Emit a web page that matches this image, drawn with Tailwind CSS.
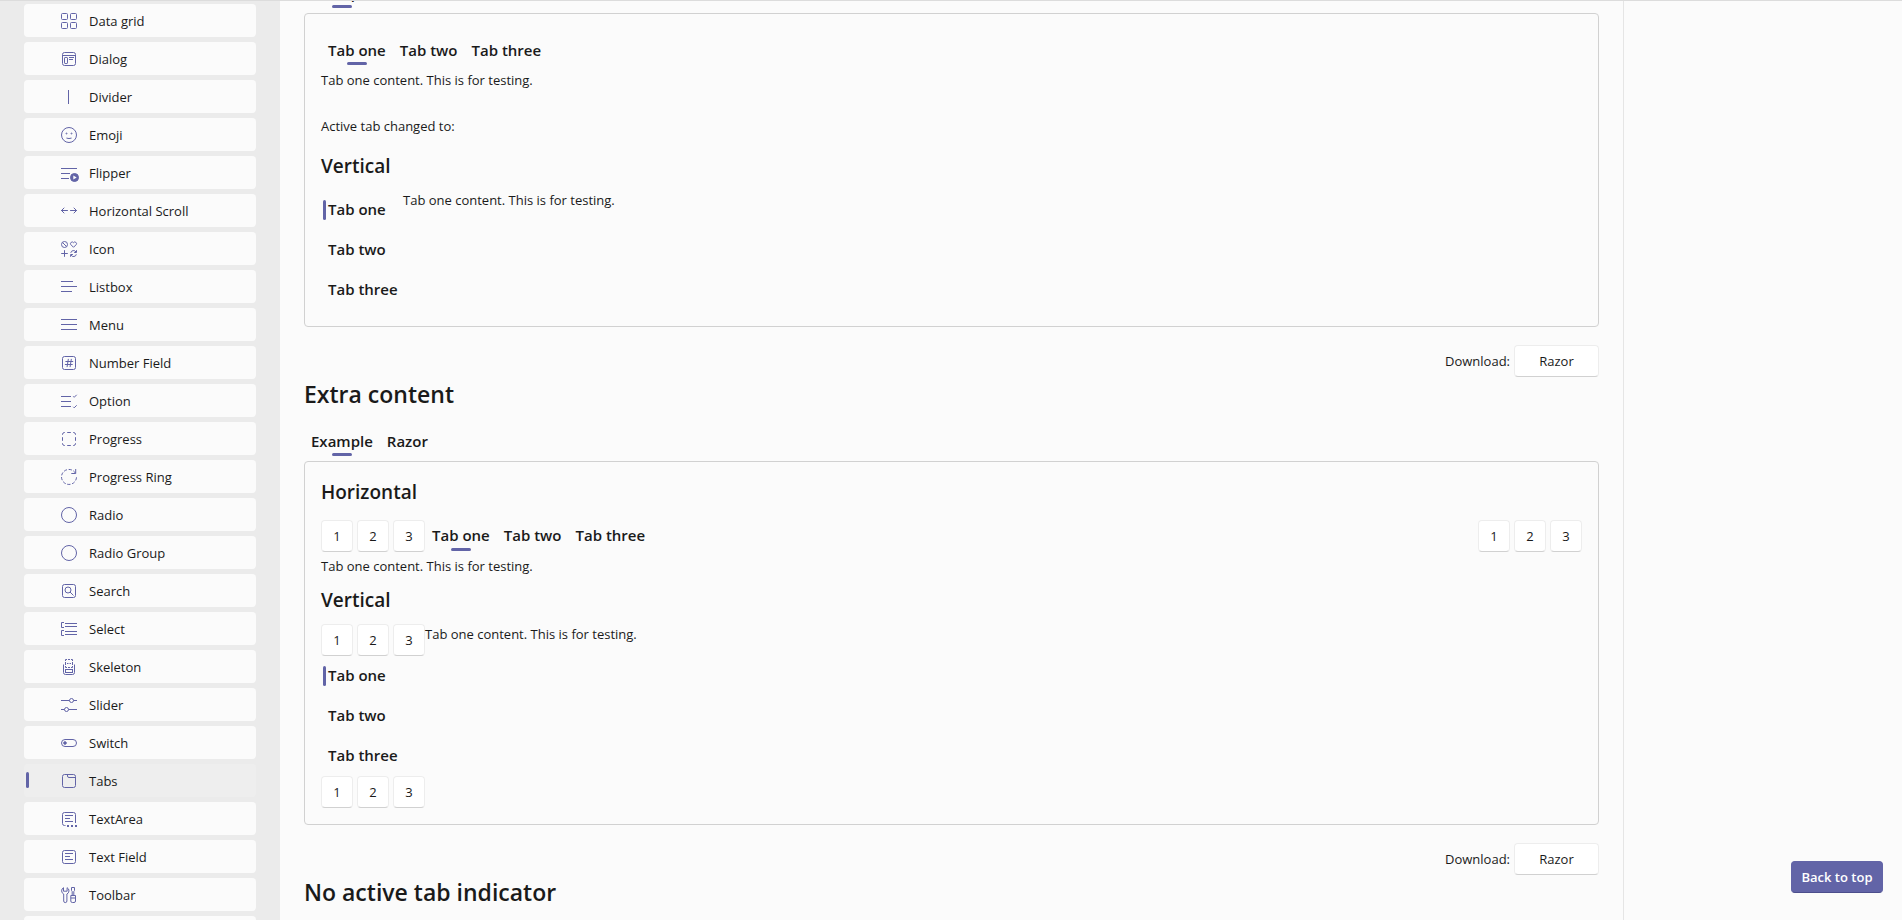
<!DOCTYPE html>
<html lang="en">
<head>
<meta charset="utf-8">
<title>Tabs</title>
<script src="https://cdn.jsdelivr.net/npm/@tailwindcss/browser@4"></script>
</head>
<body class="h-screen overflow-hidden bg-[#fbfbfb] font-['Segoe_UI','Open_Sans',sans-serif] text-[13px] leading-5 text-[#1a1a1a]">
<div class="flex h-full border-t border-[#dcdcdc]">

  <nav aria-label="Components" class="w-[280px] shrink-0 overflow-hidden bg-[#ebebeb] px-6 pt-[3px]">
    <ul class="flex flex-col gap-[5px] [&_a]:flex [&_a]:h-[33px] [&_a]:items-center [&_a]:gap-[10px] [&_a]:rounded [&_a]:bg-[#fbfbfb] [&_a]:pt-px [&_a]:pl-[35px] [&_svg]:size-5 [&_svg]:shrink-0 [&_svg]:overflow-visible [&_svg]:fill-none [&_svg]:stroke-[#6264a7]">
      <li><a href="#"><svg viewBox="0 0 20 20"><rect x="2.5" y="2.5" width="6" height="6" rx="1"/><rect x="11.5" y="2.5" width="6" height="6" rx="1"/><rect x="2.5" y="11.5" width="6" height="6" rx="1"/><rect x="11.5" y="11.5" width="6" height="6" rx="1"/></svg>Data grid</a></li>
      <li><a href="#"><svg viewBox="0 0 20 20"><rect x="3.5" y="3.5" width="13" height="13" rx="2"/><path d="M3.5 6.5h13M10 8.5h5M10 10.5h4"/><rect x="5.5" y="8.5" width="3" height="6" rx=".6"/></svg>Dialog</a></li>
      <li><a href="#"><svg viewBox="0 0 20 20"><path d="M9.5 3v14"/></svg>Divider</a></li>
      <li><a href="#"><svg viewBox="0 0 20 20"><circle cx="10" cy="10" r="7.5"/><path d="M7.8 13.2q2.2.8 4.4 0" stroke-linecap="round"/><circle cx="7.5" cy="8.5" r=".5"/><circle cx="12.5" cy="8.5" r=".5"/></svg>Emoji</a></li>
      <li><a href="#"><svg viewBox="0 0 20 20"><path d="M2 5.5h16M2 10.5h9M2 15.5h8"/><circle cx="15.5" cy="14.5" r="4" class="fill-[#6264a7]"/><path d="M14.3 12.4v4.2l3.4-2.1z" class="fill-[#fbfbfb] stroke-none!"/></svg>Flipper</a></li>
      <li><a href="#"><svg viewBox="0 0 20 20"><path d="M2.5 9.5h6M5 7 2.5 9.5 5 12M11.5 9.5h6M15 7l2.5 2.5L15 12" stroke-linecap="round" stroke-linejoin="round"/></svg>Horizontal Scroll</a></li>
      <li><a href="#"><svg viewBox="0 0 20 20"><circle cx="5.5" cy="5.5" r="3"/><path d="m3.5 3.5 4 4M14.5 8.3l-2.7-2.7a1.6 1.6 0 1 1 2.7-1.9 1.6 1.6 0 1 1 2.7 1.9zM5.5 11.2v6.6M2.2 14.5h6.6M11.8 13.8a2.8 2.8 0 0 1 5.2-.8M17.5 11.2v2.3h-2.3M17.3 15.3a2.8 2.8 0 0 1-5.2.8M11.6 17.8v-2.3h2.3"/></svg>Icon</a></li>
      <li><a href="#"><svg viewBox="0 0 20 20"><path d="M2 4.5h12M2 9.5h16M2 14.5h11"/></svg>Listbox</a></li>
      <li><a href="#"><svg viewBox="0 0 20 20"><path d="M2 4.5h16M2 9.5h16M2 14.5h16"/></svg>Menu</a></li>
      <li><a href="#"><svg viewBox="0 0 20 20"><rect x="3.5" y="3.5" width="13" height="13" rx="2"/><path d="m9.3 6.3-1.2 7.4M12.3 6.3l-1.2 7.4M6.8 8.5h7M6.3 11.5h7" stroke-linecap="round"/></svg>Number Field</a></li>
      <li><a href="#"><svg viewBox="0 0 20 20"><path d="M2 5.5h10M2 10.5h10M2 15.5h10M14.2 5.3l1 1 2.5-2.5M14.2 15.8l1 1 2.5-2.5"/></svg>Option</a></li>
      <li><a href="#"><svg viewBox="0 0 20 20"><path d="M3.5 6V5.5a2 2 0 0 1 2-2H6M14 3.5h.5a2 2 0 0 1 2 2V6M16.5 14v.5a2 2 0 0 1-2 2H14M6 16.5h-.5a2 2 0 0 1-2-2V14M8.2 3.5h3.6M8.2 16.5h3.6M3.5 8.2v3.6M16.5 8.2v3.6"/></svg>Progress</a></li>
      <li><a href="#"><svg viewBox="0 0 20 20"><path d="M16.5 6.2A7.5 7.5 0 1 0 17.5 10" stroke-dasharray="3.2 1.7"/><path d="M16.7 2v4.5h-4.4"/></svg>Progress Ring</a></li>
      <li><a href="#"><svg viewBox="0 0 20 20"><circle cx="10" cy="10" r="7.5"/></svg>Radio</a></li>
      <li><a href="#"><svg viewBox="0 0 20 20"><circle cx="10" cy="10" r="7.5"/></svg>Radio Group</a></li>
      <li><a href="#"><svg viewBox="0 0 20 20"><rect x="3.5" y="3.5" width="13" height="13" rx="2"/><circle cx="9" cy="9" r="3"/><path d="m11.2 11.2 3 3" stroke-linecap="round"/></svg>Search</a></li>
      <li><a href="#"><svg viewBox="0 0 20 20"><path d="M5 3.5H2.5v5H5M5 11.5H2.5v5H5M6 4.5h12M6 7.5h12M6 12.5h12M6 15.5h12"/></svg>Select</a></li>
      <li><a href="#"><svg viewBox="0 0 20 20"><path d="M4.5 7.5v8a2 2 0 0 0 2 2h7a2 2 0 0 0 2-2v-8"/><rect x="6.500" y="12.500" width="7" height="3"/><path d="M6.500 4V2.500H8M9 2.500h2M12 2.500h1.500V4M6.500 5v3M13.500 5v3M8 6.500h1.500M10.500 6.500H12M6.500 9v1.500H8M9 10.500h2M12 10.500h1.500V9"/></svg>Skeleton</a></li>
      <li><a href="#"><svg viewBox="0 0 20 20"><path d="M2 5.5h8.5M14.5 5.5H18M2 14.5h3.5M9.5 14.5H18"/><circle cx="12.5" cy="5.5" r="2"/><circle cx="7.5" cy="14.5" r="2"/></svg>Slider</a></li>
      <li><a href="#"><svg viewBox="0 0 20 20"><rect x="2.5" y="6.5" width="15" height="7" rx="3.5"/><circle cx="6" cy="10" r="1.3" class="fill-[#6264a7]"/></svg>Switch</a></li>
      <li class="relative"><a href="#" aria-current="page" class="bg-[#eeeeee]!"><span class="absolute top-2 left-[2px] h-4 w-[3px] rounded-full bg-[#6264a7]"></span><svg viewBox="0 0 20 20"><rect x="3.5" y="3.5" width="13" height="13" rx="2"/><path d="M8.5 3.5v1.5a1.5 1.5 0 0 0 1.5 1.5h6.5"/></svg>Tabs</a></li>
      <li><a href="#"><svg viewBox="0 0 20 20"><path d="M6.5 16.5h-1a2 2 0 0 1-2-2v-9a2 2 0 0 1 2-2h9a2 2 0 0 1 2 2V14M6 6.5h8M6 9.5h5M6 12.5h8"/><path d="M8 17h2M12 17h2M16 17h2" stroke-width="2"/></svg>TextArea</a></li>
      <li><a href="#"><svg viewBox="0 0 20 20"><rect x="3.5" y="3.5" width="13" height="13" rx="2"/><path d="M6 6.5h8M6 9.5h5M6 12.5h8"/></svg>Text Field</a></li>
      <li><a href="#"><svg viewBox="0 0 20 20"><path d="M4.500 2.700a3.500 3.500 0 0 0 .2 6.300v7a1.500 1.500 0 0 0 3.200 0V9a3.500 3.500 0 0 0 .2-6.300v3.500H4.500zM12.500 2.500h3v3l-.7 1v4h-1.600v-4l-.7-1zM11.800 10.500h4.700v5.500a1.500 1.500 0 0 1-1.500 1.500h-1.700a1.500 1.500 0 0 1-1.500-1.500zM11.800 13h4.700" stroke-linejoin="round"/></svg>Toolbar</a></li>
      <li><a href="#" aria-label="Tooltip"></a></li>
    </ul>
  </nav>

  <main class="min-w-0 flex-1 overflow-hidden px-6">
    <section>
      <div role="tablist" class="-mt-[23px] flex h-8 text-[15px] font-semibold">
        <button role="tab" aria-selected="true" class="relative px-[7px] pb-[2px]">Example<span class="absolute bottom-[2px] left-1/2 h-[3px] w-5 -translate-x-1/2 rounded-full bg-[#6264a7]"></span></button>
        <button role="tab" class="px-[7px] pb-[2px]">Razor</button>
      </div>
      <div class="mt-[3px] rounded border border-[#d1d1d1] p-4">
        <div role="tablist" class="mt-[5px] flex h-8 text-[15px] font-semibold">
          <button role="tab" aria-selected="true" class="relative px-[7px] pb-[2px]">Tab one<span class="absolute bottom-[2px] left-1/2 h-[3px] w-5 -translate-x-1/2 rounded-full bg-[#6264a7]"></span></button>
          <button role="tab" class="px-[7px] pb-[2px]">Tab two</button>
          <button role="tab" class="px-[7px] pb-[2px]">Tab three</button>
        </div>
        <p class="mt-[3px]">Tab one content. This is for testing.</p>
        <p class="mt-[26px]">Active tab changed to:</p>
        <h4 class="mt-4 text-[19px] leading-7 font-semibold">Vertical</h4>
        <div class="mt-[10px] flex">
          <div role="tablist" aria-orientation="vertical" class="flex w-[82px] flex-col text-[15px] font-semibold whitespace-nowrap">
            <button role="tab" aria-selected="true" class="relative h-10 px-[7px] pb-[2px] text-left">Tab one<span class="absolute top-[10px] left-[2px] h-5 w-[3px] rounded-full bg-[#6264a7]"></span></button>
            <button role="tab" class="h-10 px-[7px] pb-[2px] text-left">Tab two</button>
            <button role="tab" class="h-10 px-[7px] pb-[2px] text-left">Tab three</button>
          </div>
          <p>Tab one content. This is for testing.</p>
        </div>
      </div>
      <div class="mt-[18px] flex items-center justify-end gap-1">
        <span>Download:</span>
        <button class="h-8 w-[85px] rounded border border-[#ededed] border-b-[#d1d1d1] bg-white">Razor</button>
      </div>
    </section>

    <section>
      <h2 class="mt-px mb-4 text-[23px] leading-8 font-semibold">Extra content</h2>
      <div role="tablist" class="flex h-8 text-[15px] font-semibold">
        <button role="tab" aria-selected="true" class="relative px-[7px] pb-[2px]">Example<span class="absolute bottom-[2px] left-1/2 h-[3px] w-5 -translate-x-1/2 rounded-full bg-[#6264a7]"></span></button>
        <button role="tab" class="px-[7px] pb-[2px]">Razor</button>
      </div>
      <div class="mt-[3px] rounded border border-[#d1d1d1] p-4">
        <h4 class="text-[19px] leading-7 font-semibold">Horizontal</h4>
        <div class="mt-[14px] flex items-center">
          <div class="flex gap-1">
            <button class="size-8 rounded border border-[#ededed] border-b-[#d1d1d1] bg-white">1</button>
            <button class="size-8 rounded border border-[#ededed] border-b-[#d1d1d1] bg-white">2</button>
            <button class="size-8 rounded border border-[#ededed] border-b-[#d1d1d1] bg-white">3</button>
          </div>
          <div role="tablist" class="flex h-8 text-[15px] font-semibold">
            <button role="tab" aria-selected="true" class="relative px-[7px] pb-[2px]">Tab one<span class="absolute bottom-px left-1/2 h-[3px] w-5 -translate-x-1/2 rounded-full bg-[#6264a7]"></span></button>
            <button role="tab" class="px-[7px] pb-[2px]">Tab two</button>
            <button role="tab" class="px-[7px] pb-[2px]">Tab three</button>
          </div>
          <div class="ml-auto flex gap-1">
            <button class="size-8 rounded border border-[#ededed] border-b-[#d1d1d1] bg-white">1</button>
            <button class="size-8 rounded border border-[#ededed] border-b-[#d1d1d1] bg-white">2</button>
            <button class="size-8 rounded border border-[#ededed] border-b-[#d1d1d1] bg-white">3</button>
          </div>
        </div>
        <p class="mt-1">Tab one content. This is for testing.</p>
        <h4 class="mt-[10px] text-[19px] leading-7 font-semibold">Vertical</h4>
        <div class="mt-[10px] flex">
          <div>
            <div class="flex gap-1">
              <button class="size-8 rounded border border-[#ededed] border-b-[#d1d1d1] bg-white">1</button>
              <button class="size-8 rounded border border-[#ededed] border-b-[#d1d1d1] bg-white">2</button>
              <button class="size-8 rounded border border-[#ededed] border-b-[#d1d1d1] bg-white">3</button>
            </div>
            <div role="tablist" aria-orientation="vertical" class="flex flex-col text-[15px] font-semibold">
              <button role="tab" aria-selected="true" class="relative h-10 px-[7px] pb-[2px] text-left">Tab one<span class="absolute top-[10px] left-[2px] h-5 w-[3px] rounded-full bg-[#6264a7]"></span></button>
              <button role="tab" class="h-10 px-[7px] pb-[2px] text-left">Tab two</button>
              <button role="tab" class="h-10 px-[7px] pb-[2px] text-left">Tab three</button>
            </div>
            <div class="flex gap-1">
              <button class="size-8 rounded border border-[#ededed] border-b-[#d1d1d1] bg-white">1</button>
              <button class="size-8 rounded border border-[#ededed] border-b-[#d1d1d1] bg-white">2</button>
              <button class="size-8 rounded border border-[#ededed] border-b-[#d1d1d1] bg-white">3</button>
            </div>
          </div>
          <p>Tab one content. This is for testing.</p>
        </div>
      </div>
      <div class="mt-[18px] flex items-center justify-end gap-1">
        <span>Download:</span>
        <button class="h-8 w-[85px] rounded border border-[#ededed] border-b-[#d1d1d1] bg-white">Razor</button>
      </div>
    </section>

    <section>
      <h2 class="mt-px mb-4 text-[23px] leading-8 font-semibold">No active tab indicator</h2>
    </section>
  </main>

  <aside class="w-[279px] shrink-0 border-l border-[#e5e5e5]"></aside>
</div>
<button class="fixed right-[19px] bottom-[27px] h-8 w-[92px] rounded border border-[#6264a7] border-b-[#4c4e8c] bg-[#6264a7] font-semibold text-white">Back to top</button>
</body>
</html>
